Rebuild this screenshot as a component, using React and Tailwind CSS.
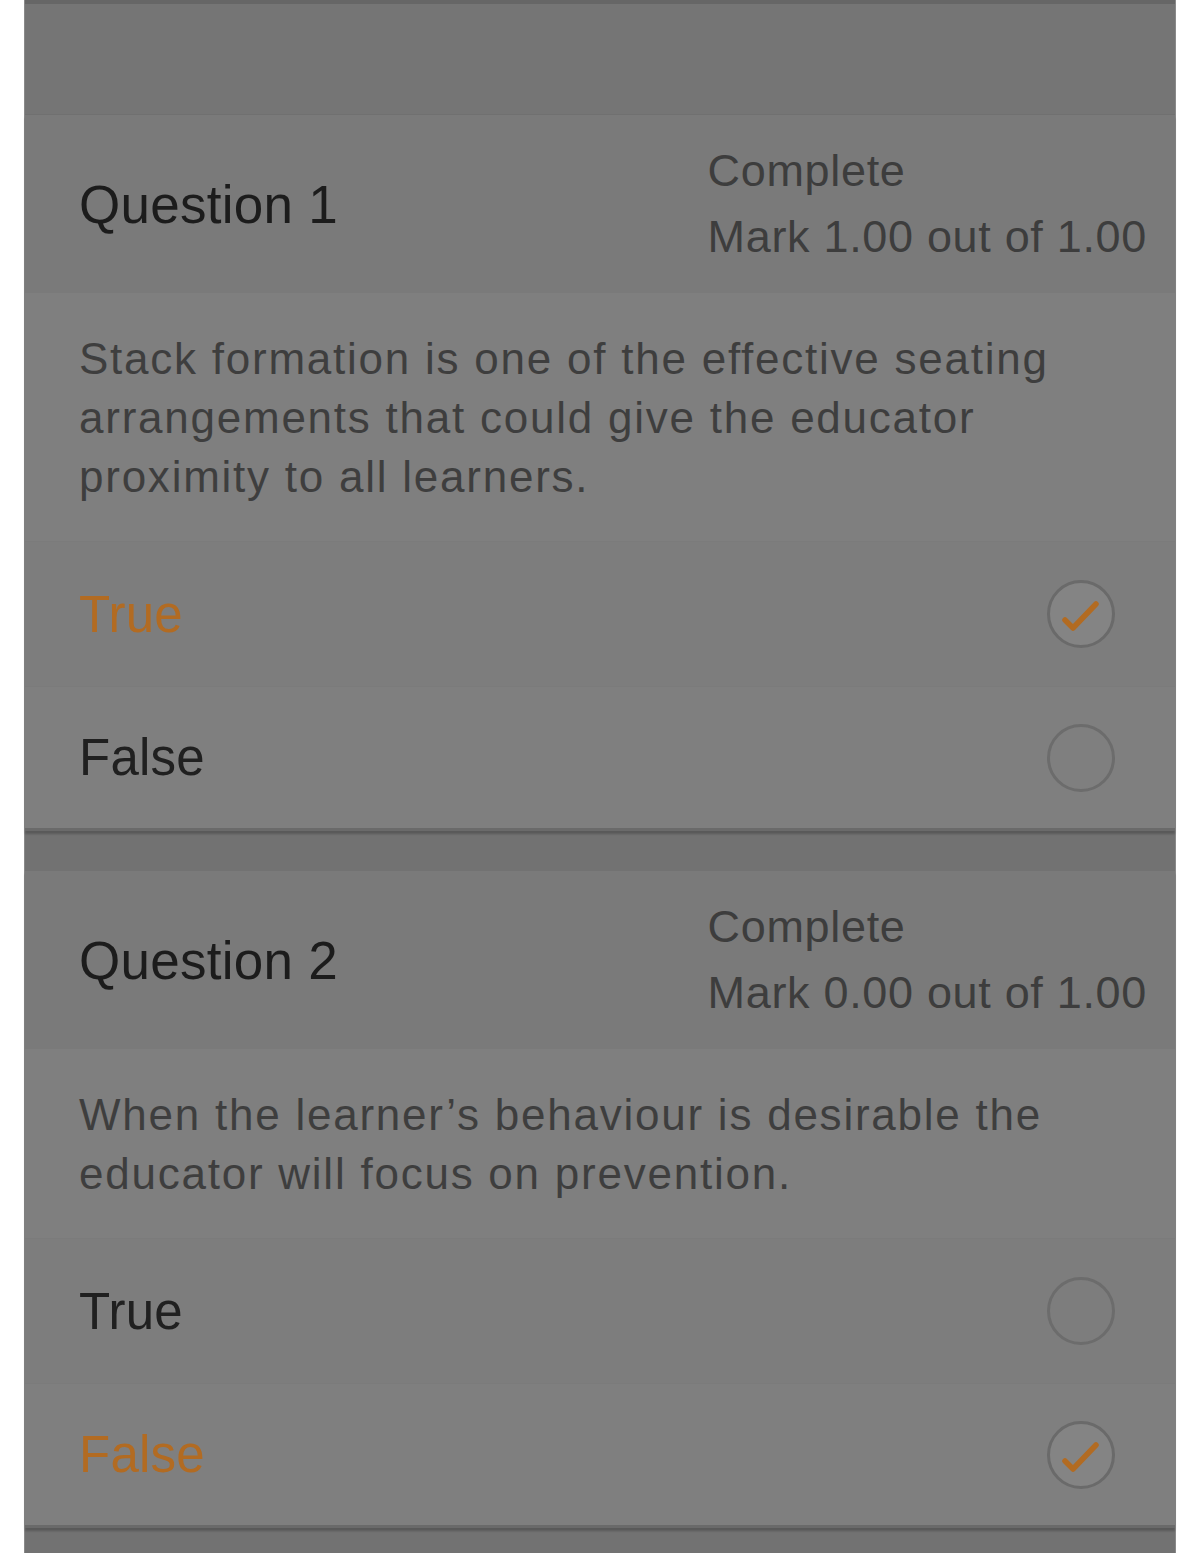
import React from "react";

const questions = [
    {
        number: 1,
        mark: "Mark 1.00 out of 1.00",
        text: "Stack formation is one of the effective seating arrangements that could give the educator proximity to all learners.",
        selected: "True",
    },
    {
        number: 2,
        mark: "Mark 0.00 out of 1.00",
        text: "When the learner\u2019s behaviour is desirable the educator will focus on prevention.",
        selected: "False",
    },
];

const Radio = ({ checked }) => (
    <div
        className={
            "w-[68px] h-[68px] rounded-full border-[3px] flex items-center justify-center " +
            (checked ? "border-[#6a6a6a] bg-[#848484]" : "border-[#6c6c6c]")
        }
    >
        {checked && (
            <svg width="62" height="62" viewBox="0 0 62 62" fill="none">
                <path
                    d="M15 37 L23 45 L46 21"
                    stroke="#b26b22"
                    strokeWidth="5.5"
                    strokeLinecap="round"
                    strokeLinejoin="round"
                />
            </svg>
        )}
    </div>
);

const OptionRow = ({ label, checked, first }) => (
    <div
        className={
            "flex items-center justify-between pl-[54px] pr-[60px] border-t border-[#7b7b7b] " +
            (first ? "h-[145px] bg-[#7d7d7d]" : "h-[142px] bg-[#7f7f7f]")
        }
    >
        <span
            className={
                "text-[51px] leading-none tracking-[0.005em] " +
                (checked ? "text-[#b26b22]" : "text-[#202020]")
            }
        >
            {label}
        </span>
        <Radio checked={checked} />
    </div>
);

const QuestionCard = ({ number, mark, text, selected }) => (
    <div className="shadow-[0_3px_2px_rgba(0,0,0,0.22)] border-b-[3px] border-[#6a6a6a]">
        <div className="h-[178px] bg-[#7a7a7a] flex items-center justify-between pl-[54px] pr-[28px]">
            <h3 className="text-[53px] leading-none text-[#1c1c1c] tracking-[0.005em]">Question {number}</h3>
            <div className="text-[45px] leading-[66px] text-[#3d3d3d] tracking-[0.015em]">
                <div>Complete</div>
                <div>{mark}</div>
            </div>
        </div>
        <div className="bg-[#7f7f7f] pl-[54px] pr-[28px] pt-[36px] pb-[35px]">
            <p className="text-[44px] leading-[59px] text-[#3e3e3e] tracking-[0.04em]">{text}</p>
        </div>
        <OptionRow label="True" checked={selected === "True"} first />
        <OptionRow label="False" checked={selected === "False"} />
    </div>
);

const App = () => {
    return (
        <div className="min-h-[1553px] bg-white px-[24px] font-['Liberation_Sans',Arial,sans-serif]">
            <div className="bg-[#727272] min-h-[1553px] border-x border-[#8a8a8a]">
                <div className="h-[4px] bg-[#666666]" />
                <div className="h-[111px] bg-[#757575] border-b border-[#707070]" />
                <QuestionCard {...questions[0]} />
                <div className="h-[40px]" />
                <QuestionCard {...questions[1]} />
            </div>
        </div>
    );
};

export default App;
